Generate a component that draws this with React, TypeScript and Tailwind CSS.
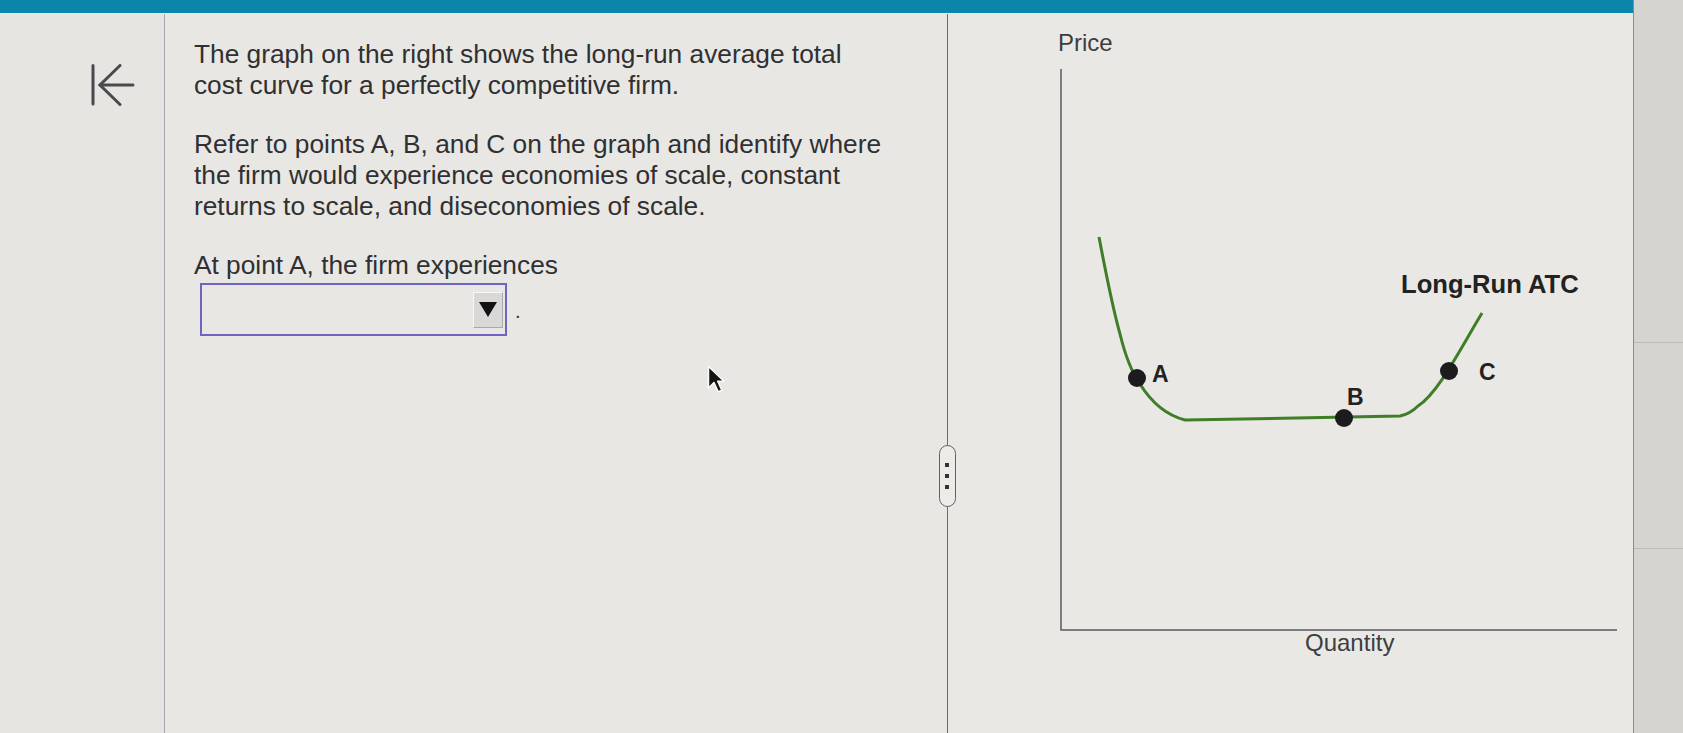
import React from 'react';

const curve =
  'M1099 238 C1106 275 1113 310 1120 335 Q1128 368 1140 385 Q1158 414 1185 421 L1400 417 Q1410 415 1418 407 C1438 394 1458 354 1482 314';

function BackIcon() {
  return (
    <svg width="44" height="42" viewBox="0 0 44 42" fill="none" stroke="#4a4a4e" strokeWidth="3" strokeLinecap="round">
      <path d="M2 1.5V40" />
      <path d="M29 1.5 9 21l20 19.5" />
      <path d="M9 21h33" />
    </svg>
  );
}

function Graph() {
  return (
    <svg width="685" height="718" viewBox="948 15 685 718" className="block">
      <text x="1058" y="52" fontSize="24" fill="#3d3d40" fontFamily="Liberation Sans, Arial, sans-serif">
        Price
      </text>
      <path d="M1061 70V631H1617" fill="none" stroke="#5b5560" strokeWidth="1.5" />
      <text x="1305" y="652" fontSize="24" fill="#3d3d40" fontFamily="Liberation Sans, Arial, sans-serif">
        Quantity
      </text>
      <path d={curve} fill="none" stroke="#3f7d26" strokeWidth="3" strokeLinejoin="round" />
      <circle cx="1137" cy="379" r="9" fill="#1c1c1e" />
      <circle cx="1344" cy="419" r="9" fill="#1c1c1e" />
      <circle cx="1449" cy="372" r="9" fill="#1c1c1e" />
      <g fontFamily="Liberation Sans, Arial, sans-serif" fontWeight="700" fill="#222">
        <text x="1152" y="383" fontSize="23">A</text>
        <text x="1347" y="406" fontSize="23">B</text>
        <text x="1479" y="381" fontSize="23">C</text>
        <text x="1401" y="294" fontSize="25.6">Long-Run ATC</text>
      </g>
    </svg>
  );
}

export default function App() {
  return (
    <div className="relative h-[733px] w-[1683px] overflow-hidden bg-[#e8e7e4] font-['Liberation_Sans',Arial,sans-serif] text-[#303032]">
      <div className="flex h-full">
        <div className="flex w-[1634px] flex-col border-r border-[#8a8a8c] shadow-[1px_0_3px_rgba(0,0,0,0.15)]">
          <div className="h-[14px] border-b border-[#eeeeee] bg-[#0b85a9]" />

          <div className="flex flex-1">
            {/* nav column */}
            <aside className="w-[165px] border-r-[1.5px] border-[#aaa5b3] bg-[#e6e5e2] pl-[91px] pt-[50px]">
              <BackIcon />
            </aside>

            {/* question */}
            <section className="w-[782px] pl-[29px] pt-[25px] text-[26.3px] leading-[31px]">
              <div className="w-[696px]">
                <p className="mb-[28px]">
                  The graph on the right shows the long-run average total cost curve for a perfectly competitive firm.
                </p>
                <p className="mb-[28px]">
                  Refer to points A, B, and C on the graph and identify where the firm would experience economies of
                  scale, constant returns to scale, and diseconomies of scale.
                </p>
                <p>At point A, the firm experiences</p>
                <div className="ml-[6px] mt-[2px] flex items-center gap-[8px]">
                  <div className="flex h-[53px] w-[307px] items-center justify-end border-2 border-[#6f63c4] bg-[#e8e7e4] pr-[2px]">
                    <div className="flex h-[36px] w-[30px] items-center justify-center border border-t-[#f6f6f6] border-l-[#f6f6f6] border-b-[#a9a9a9] border-r-[#a9a9a9] bg-[#d9d8d6]">
                      <svg width="18" height="15" viewBox="0 0 18 15">
                        <path d="M0 0h18L9 15z" fill="#111" />
                      </svg>
                    </div>
                  </div>
                  <span className="mt-[2px] text-[20px] leading-none">.</span>
                </div>
              </div>
            </section>

            {/* divider */}
            <div className="relative w-[1.5px] bg-[#6a6a72]">
              <div className="absolute left-[-8px] top-[431px] flex h-[62px] w-[17px] flex-col items-center justify-center gap-[7px] rounded-full border-[1.5px] border-[#5f5f66] bg-[#ecebe8]">
                <span className="h-[4px] w-[4px] bg-[#333]" />
                <span className="h-[4px] w-[4px] bg-[#333]" />
                <span className="h-[4px] w-[4px] bg-[#333]" />
              </div>
            </div>

            {/* graph */}
            <div className="flex-1 bg-[#e9e8e5]">
              <Graph />
            </div>
          </div>
        </div>

        {/* neighbouring panel */}
        <div className="flex flex-1 flex-col bg-[#d5d4d0]">
          <div className="h-[343px] border-b border-[#bcbbb7]" />
          <div className="h-[206px] border-b border-[#bcbbb7]" />
          <div className="flex-1" />
        </div>
      </div>

      {/* mouse pointer */}
      <svg className="absolute left-[707px] top-[365px]" width="20" height="30" viewBox="0 0 20 30">
        <path d="M1.5 1.5V23l5.5-5.5 4.2 9.3 3.6-1.6-4.1-9H17z" fill="#141414" stroke="#fafafa" strokeWidth="1.5" strokeLinejoin="round" />
      </svg>
    </div>
  );
}
